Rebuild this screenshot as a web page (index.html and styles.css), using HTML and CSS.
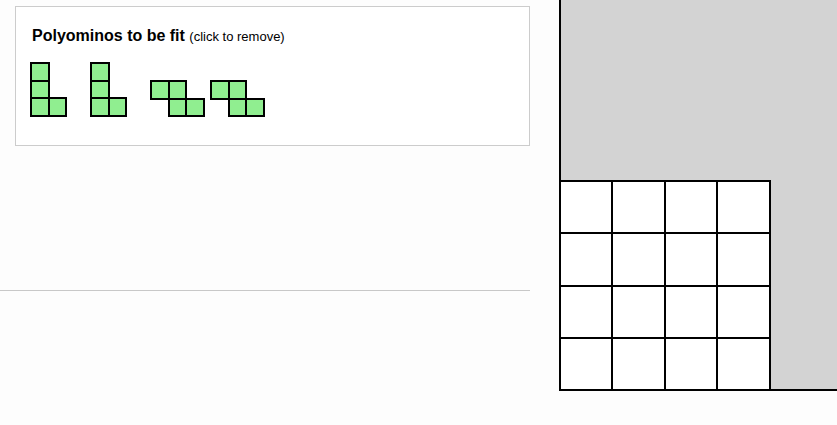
FILE: index.html
```html
<!DOCTYPE html>
<html>
<head>
<meta charset="utf-8">
<link rel="stylesheet" href="styles.css">
</head>
<body>
<div class="page">
  <div class="left">
    <div class="panel">
      <div class="title"><b>Polyominos to be fit</b> <span class="hint">(click to remove)</span></div>
      <div class="pieces">
        <div class="slot">
          <svg class="piece" width="37" height="55" viewBox="0 0 37 55">
            <g fill="#90ee90" stroke="#000" stroke-width="2">
              <rect x="1" y="1" width="18" height="18"/>
              <rect x="1" y="19" width="18" height="17"/>
              <rect x="1" y="36" width="18" height="18"/>
              <rect x="19" y="36" width="17" height="18"/>
            </g>
          </svg>
        </div>
        <div class="slot">
          <svg class="piece" width="37" height="55" viewBox="0 0 37 55">
            <g fill="#90ee90" stroke="#000" stroke-width="2">
              <rect x="1" y="1" width="18" height="18"/>
              <rect x="1" y="19" width="18" height="17"/>
              <rect x="1" y="36" width="18" height="18"/>
              <rect x="19" y="36" width="17" height="18"/>
            </g>
          </svg>
        </div>
        <div class="slot">
          <svg class="piece" width="55" height="37" viewBox="0 0 55 37">
            <g fill="#90ee90" stroke="#000" stroke-width="2">
              <rect x="1" y="1" width="18" height="18"/>
              <rect x="19" y="1" width="17" height="18"/>
              <rect x="19" y="19" width="17" height="17"/>
              <rect x="36" y="19" width="18" height="17"/>
            </g>
          </svg>
        </div>
        <div class="slot">
          <svg class="piece" width="55" height="37" viewBox="0 0 55 37">
            <g fill="#90ee90" stroke="#000" stroke-width="2">
              <rect x="1" y="1" width="18" height="18"/>
              <rect x="19" y="1" width="17" height="18"/>
              <rect x="19" y="19" width="17" height="17"/>
              <rect x="36" y="19" width="18" height="17"/>
            </g>
          </svg>
        </div>
      </div>
    </div>
    <div class="spacer"></div>
  </div>
  <div class="board">
    <svg width="290" height="392" viewBox="0 0 290 392">
      <rect x="0" y="0" width="290" height="391" fill="#d3d3d3"/>
      <rect x="1" y="181" width="210" height="210" fill="#fff"/>
      <g stroke="#000" stroke-width="2">
        <line x1="1" y1="0" x2="1" y2="391"/>
        <line x1="0" y1="390" x2="290" y2="390"/>
        <line x1="0" y1="181" x2="212" y2="181"/>
        <line x1="0" y1="233" x2="212" y2="233"/>
        <line x1="0" y1="286" x2="212" y2="286"/>
        <line x1="0" y1="338" x2="212" y2="338"/>
        <line x1="53" y1="180" x2="53" y2="391"/>
        <line x1="106" y1="180" x2="106" y2="391"/>
        <line x1="158" y1="180" x2="158" y2="391"/>
        <line x1="211" y1="180" x2="211" y2="391"/>
      </g>
    </svg>
  </div>
</div>
</body>
</html>
```

FILE: styles.css
```css
html, body {
  margin: 0;
  padding: 0;
  background: #fdfdfd;
  overflow: hidden;
}
.page {
  display: flex;
  align-items: flex-start;
  width: 837px;
  height: 425px;
  overflow: hidden;
  font-family: "Liberation Sans", Arial, sans-serif;
  color: #000;
}
.left {
  width: 530px;
  flex: none;
}
.panel {
  margin: 6px 0 0 15px;
  border: 1px solid #cccccc;
  background: #fff;
  padding: 20px 14px 28px 14px;
}
.title {
  font-size: 16px;
  line-height: 18px;
  padding-left: 2px;
}
.hint {
  font-size: 13px;
}
.pieces {
  display: flex;
  align-items: flex-end;
  margin-top: 16px;
}
.slot {
  width: 60px;
  flex: none;
  display: flex;
  align-items: flex-end;
}
.piece {
  display: block;
}
.spacer {
  height: 144px;
  border-bottom: 1px solid #c8c8c8;
}
.board {
  margin-left: 29px;
  flex: none;
}
.board svg {
  display: block;
}
```
